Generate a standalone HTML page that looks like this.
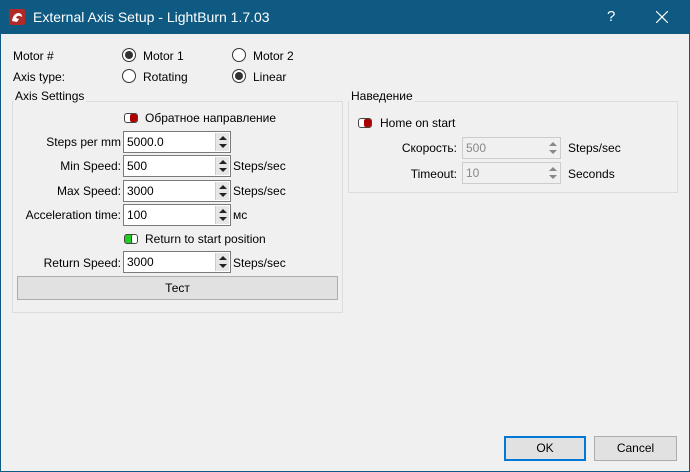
<!DOCTYPE html>
<html><head><style>
body{margin:0;width:690px;height:472px;overflow:hidden;font-family:"Liberation Sans",sans-serif;font-size:12px;color:#000;}
.win{position:absolute;left:0;top:0;width:688px;height:471px;background:#f0f0f0;border:1px solid #0e5a82;border-top:none;}
.tb{position:absolute;left:0;top:0;width:690px;height:34px;background:#0e5a82;color:#fff;}
.a{position:absolute;white-space:nowrap;}
.radio{position:absolute;width:12px;height:12px;border:1px solid #333;border-radius:50%;background:#fff;}
.radio.on::after{content:"";position:absolute;left:2px;top:2px;width:8px;height:8px;border-radius:50%;background:#333;}
.grp{position:absolute;border:1px solid #dcdcdc;}
.spin{position:absolute;width:106px;height:20px;border:1px solid #7a7a7a;background:#fff;}
.spin span{position:absolute;left:3px;top:3px;}
.spin i{position:absolute;right:1px;top:1px;width:13px;height:18px;background:#e6e6e6;border-left:1px solid #ccc;}
.spin i::before{content:"";position:absolute;left:3px;top:3px;border:4px solid transparent;border-bottom:4px solid #222;border-top:none;}
.spin i::after{content:"";position:absolute;left:3px;top:11px;border:4px solid transparent;border-top:4px solid #222;border-bottom:none;}
.spin.dis{border-color:#ccc;background:#f0f0f0;color:#888;}
.spin.dis i{background:#f0f0f0;border:none;}
.spin.dis i::before{border-bottom-color:#888}.spin.dis i::after{border-top-color:#888}
.tog{position:absolute;width:12px;height:8px;border:1px solid #444;border-radius:3px;background:#fff;}
.tog.r::after{content:"";position:absolute;right:0;top:0;width:7px;height:8px;background:#a00;border-radius:2px;}
.tog.g{background:#2c2}
.tog.g::after{content:"";position:absolute;right:0;top:0;width:5px;height:8px;background:#fff;border-left:1px solid #444;border-radius:2px;}
.lbl{position:absolute;text-align:right;width:120px;left:0;}
.btn{position:absolute;background:#e1e1e1;border:1px solid #adadad;text-align:center;}
</style></head><body>
<div class="win"></div>
<div class="tb">
<svg style="position:absolute;left:9px;top:9px" width="16" height="16" viewBox="0 0 16 16"><rect width="16" height="16" rx="2" fill="#b02a2a"/><path d="M3 12 Q4 5 9 4 Q13 4 13 8 L11 7 Q8 6 7 9 L10 10 L8 13 Z" fill="#fff"/></svg>
<div class="a" style="left:33px;top:9px;font-size:14px">External Axis Setup - LightBurn 1.7.03</div>
<div class="a" style="left:607px;top:8px;font-size:15px">?</div>
<svg style="position:absolute;left:656px;top:11px" width="12" height="12"><path d="M0 0L12 12M12 0L0 12" stroke="#fff" stroke-width="1.2"/></svg>
</div>

<div class="a" style="left:13px;top:49px">Motor #</div>
<div class="radio on" style="left:122px;top:48px"></div><div class="a" style="left:143px;top:49px">Motor 1</div>
<div class="radio" style="left:232px;top:48px"></div><div class="a" style="left:253px;top:49px">Motor 2</div>
<div class="a" style="left:13px;top:70px">Axis type:</div>
<div class="radio" style="left:122px;top:69px"></div><div class="a" style="left:143px;top:70px">Rotating</div>
<div class="radio on" style="left:232px;top:69px"></div><div class="a" style="left:253px;top:70px">Linear</div>

<div class="grp" style="left:12px;top:101px;width:329px;height:210px"></div>
<div class="a" style="left:13px;top:89px;background:#f0f0f0;padding:0 2px">Axis Settings</div>
<div class="tog r" style="left:124px;top:113px"></div><div class="a" style="left:145px;top:111px">Обратное направление</div>

<div class="lbl a" style="top:135px;width:121px">Steps per mm</div><div class="spin" style="left:123px;top:131px"><span>5000.0</span><i></i></div>
<div class="lbl a" style="top:159px;width:121px">Min Speed:</div><div class="spin" style="left:123px;top:155px"><span>500</span><i></i></div><div class="a" style="left:233px;top:159px">Steps/sec</div>
<div class="lbl a" style="top:184px;width:121px">Max Speed:</div><div class="spin" style="left:123px;top:180px"><span>3000</span><i></i></div><div class="a" style="left:233px;top:184px">Steps/sec</div>
<div class="lbl a" style="top:208px;width:121px">Acceleration time:</div><div class="spin" style="left:123px;top:204px"><span>100</span><i></i></div><div class="a" style="left:233px;top:208px">мс</div>
<div class="tog g" style="left:124px;top:234px"></div><div class="a" style="left:145px;top:232px">Return to start position</div>
<div class="lbl a" style="top:256px;width:121px">Return Speed:</div><div class="spin" style="left:123px;top:251px"><span>3000</span><i></i></div><div class="a" style="left:233px;top:256px">Steps/sec</div>
<div class="btn" style="left:17px;top:276px;width:319px;height:22px;line-height:22px">Тест</div>

<div class="grp" style="left:348px;top:101px;width:328px;height:90px"></div>
<div class="a" style="left:349px;top:89px;background:#f0f0f0;padding:0 2px">Наведение</div>
<div class="tog r" style="left:358px;top:118px"></div><div class="a" style="left:380px;top:116px">Home on start</div>
<div class="a" style="left:300px;top:141px;width:157px;text-align:right">Скорость:</div><div class="spin dis" style="left:462px;top:137px;width:97px"><span>500</span><i></i></div><div class="a" style="left:568px;top:141px">Steps/sec</div>
<div class="a" style="left:300px;top:167px;width:157px;text-align:right">Timeout:</div><div class="spin dis" style="left:462px;top:162px;width:97px"><span>10</span><i></i></div><div class="a" style="left:568px;top:167px">Seconds</div>

<div class="btn" style="left:504px;top:436px;width:78px;height:21px;line-height:21px;border:2px solid #0078d7">OK</div>
<div class="btn" style="left:594px;top:436px;width:81px;height:23px;line-height:23px">Cancel</div>
</body></html>
